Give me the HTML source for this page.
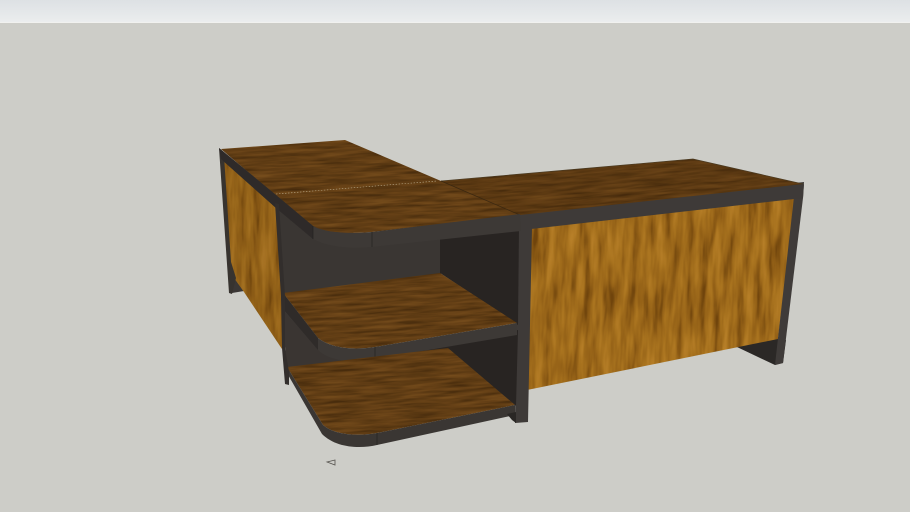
<!DOCTYPE html>
<html>
<head>
<meta charset="utf-8">
<style>
html,body{margin:0;padding:0;width:910px;height:512px;overflow:hidden;background:#cdcdc8}
svg{display:block;position:absolute;left:0;top:0}
</style>
</head>
<body>
<svg width="910" height="512" viewBox="0 0 910 512" xmlns="http://www.w3.org/2000/svg">
<defs>
<linearGradient id="bar" x1="0" y1="0" x2="0" y2="1"><stop offset="0" stop-color="#dde1e4"/><stop offset="1" stop-color="#ebedee"/></linearGradient>
<filter id="woodTop" x="0" y="0" width="100%" height="100%" color-interpolation-filters="sRGB">
<feTurbulence type="fractalNoise" baseFrequency="0.025 0.32" numOctaves="3" seed="7"/>
<feColorMatrix type="matrix" values="1.5 0 0 0 -0.25  1.5 0 0 0 -0.25  1.5 0 0 0 -0.25  0 0 0 0 1"/>
<feComponentTransfer>
<feFuncR type="table" tableValues="0.28 0.35 0.41 0.46"/>
<feFuncG type="table" tableValues="0.17 0.22 0.26 0.30"/>
<feFuncB type="table" tableValues="0.05 0.07 0.09 0.11"/>
</feComponentTransfer>
</filter>
<filter id="woodSide" x="0" y="0" width="100%" height="100%" color-interpolation-filters="sRGB">
<feTurbulence type="fractalNoise" baseFrequency="0.13 0.018" numOctaves="3" seed="11"/>
<feColorMatrix type="matrix" values="1.5 0 0 0 -0.25  1.5 0 0 0 -0.25  1.5 0 0 0 -0.25  0 0 0 0 1"/>
<feComponentTransfer>
<feFuncR type="table" tableValues="0.44 0.58 0.66 0.72"/>
<feFuncG type="table" tableValues="0.27 0.38 0.45 0.50"/>
<feFuncB type="table" tableValues="0.05 0.09 0.12 0.16"/>
</feComponentTransfer>
</filter>
<clipPath id="cSideR"><polygon points="530,228 795,197 778,339 527,390"/></clipPath>
<clipPath id="cSideL"><polygon points="222,158 230,260 234,278 244,292 282,349 286,300 279,200"/></clipPath>
<clipPath id="cTopL"><path d="M221,149 L345,140 L441,181 L520,215 L372,232 C350,234 325,233 313,226 L276,196 Z"/></clipPath>
<clipPath id="cTopR"><polygon points="441,181 693,159 803,184 520,215"/></clipPath>
<clipPath id="cS1"><path d="M283,293 L440,273 L517,323 L375,347 C355,350 332,349 318,338 Z"/></clipPath>
<clipPath id="cS2"><path d="M287,367 L448,348 L515,405 L377,433 C360,436 336,436 323,425 Z"/></clipPath>
</defs>

<!-- background & top bar -->
<rect width="910" height="512" fill="#cdcdc8"/>
<rect width="910" height="22" fill="url(#bar)"/>
<rect y="22" width="910" height="1" fill="#f1f1ef"/>

<!-- rear legs -->
<polygon points="229,262 232,293 244,291 236,276" fill="#3b3735"/>
<polygon points="737,347 778,337 786,340 783,363 775,365" fill="#2b2826"/>

<!-- left side wood -->
<g clip-path="url(#cSideL)">
<rect x="215" y="150" width="80" height="205" filter="url(#woodSide)"/>
<rect x="215" y="150" width="80" height="205" fill="#3a2006" opacity=".12"/>
</g>
<polygon points="219,148 224,156 231,262 236,278 232,294 229,293" fill="#37332f"/>

<!-- right side wood -->
<g clip-path="url(#cSideR)">
<rect x="520" y="190" width="285" height="205" filter="url(#woodSide)" transform="rotate(2 660 290)"/>
</g>
<polygon points="794,197 804,184 803,198 783,363 775,365 778,338" fill="#3f3b39"/>
<polygon points="519,214 804,182 803,198 531,229 521,232" fill="#3e3a38"/>
<polygon points="517,228 532,227 528,422 515,423" fill="#3e3a38"/>

<!-- inner walls -->
<polygon points="277,203 372,240 441,232 441,274 283,296" fill="#3a3633"/>
<polygon points="440,236 519,226 518,325 440,273" fill="#282422"/>
<polygon points="281,296 318,345 375,355 455,345 452,353 287,372" fill="#3a3532"/>
<polygon points="375,355 518,330 516,406 449,351 440,352" fill="#282422"/>

<!-- top wood right -->
<g clip-path="url(#cTopR)">
<rect x="430" y="130" width="385" height="115" filter="url(#woodTop)" transform="rotate(-5 620 190)"/>
<rect x="430" y="150" width="385" height="70" fill="#3a2006" opacity=".12"/>
</g>
<polyline points="441,181 693,159 803,184" fill="none" stroke="#4a3a22" stroke-width=".7"/>

<!-- top wood left -->
<g clip-path="url(#cTopL)">
<rect x="200" y="120" width="340" height="135" filter="url(#woodTop)" transform="rotate(-3 370 190)"/>
</g>
<line x1="276" y1="194" x2="437" y2="181" stroke="#b8a888" stroke-width=".6" stroke-dasharray="1.5 1.5"/>
<line x1="441" y1="181" x2="520" y2="215" stroke="#3a2710" stroke-width=".7"/>

<!-- top band left -->
<path d="M219,148 L276,195 L313,226 C325,233 350,234 372,232 L520,214 L521,231 L372,247 C350,249 328,247 313,239 L276,208 L221,159 Z" fill="#3d3936"/>
<path d="M219,148 L276,195 L313,226 L313,239 L276,208 L221,159 Z" fill="#2e2a29"/>
<line x1="372" y1="232" x2="372" y2="247" stroke="#262321" stroke-width=".7"/>
<line x1="313" y1="226" x2="313" y2="239" stroke="#262321" stroke-width=".7"/>

<!-- shelf 1 -->
<g clip-path="url(#cS1)">
<rect x="270" y="260" width="260" height="100" filter="url(#woodTop)" transform="rotate(-4 400 310)"/>
</g>
<path d="M283,293 L318,338 C332,349 355,350 375,347 L517,323 L517,335 L375,359 C355,363 330,362 318,350 L283,310 Z" fill="#3d3936"/>
<path d="M283,293 L318,338 L318,350 L283,309 Z" fill="#2f2b29"/>
<line x1="375" y1="347" x2="375" y2="359" stroke="#262321" stroke-width=".7"/>

<!-- shelf 2 -->
<g clip-path="url(#cS2)">
<rect x="275" y="335" width="250" height="110" filter="url(#woodTop)" transform="rotate(-4 400 390)"/>
</g>
<path d="M287,367 L323,425 C336,436 360,436 377,433 L515,405 L515,415 L377,445 C360,449 336,448 322,434 L287,373 Z" fill="#3a3633"/>
<line x1="377" y1="433" x2="377" y2="445" stroke="#262321" stroke-width=".7"/>
<polygon points="507,414 516,412 516,423 512,420" fill="#2a2725"/>

<!-- front-left post -->
<polygon points="275,203 279,204 285,296 285,348 289,372 289,385 285,384 282,348 281,296" fill="#322e2c"/>

<!-- small axis mark -->
<path d="M327,462 L335,460 L335,465 Z" fill="none" stroke="#55524e" stroke-width=".8"/>
</svg>
</body>
</html>
